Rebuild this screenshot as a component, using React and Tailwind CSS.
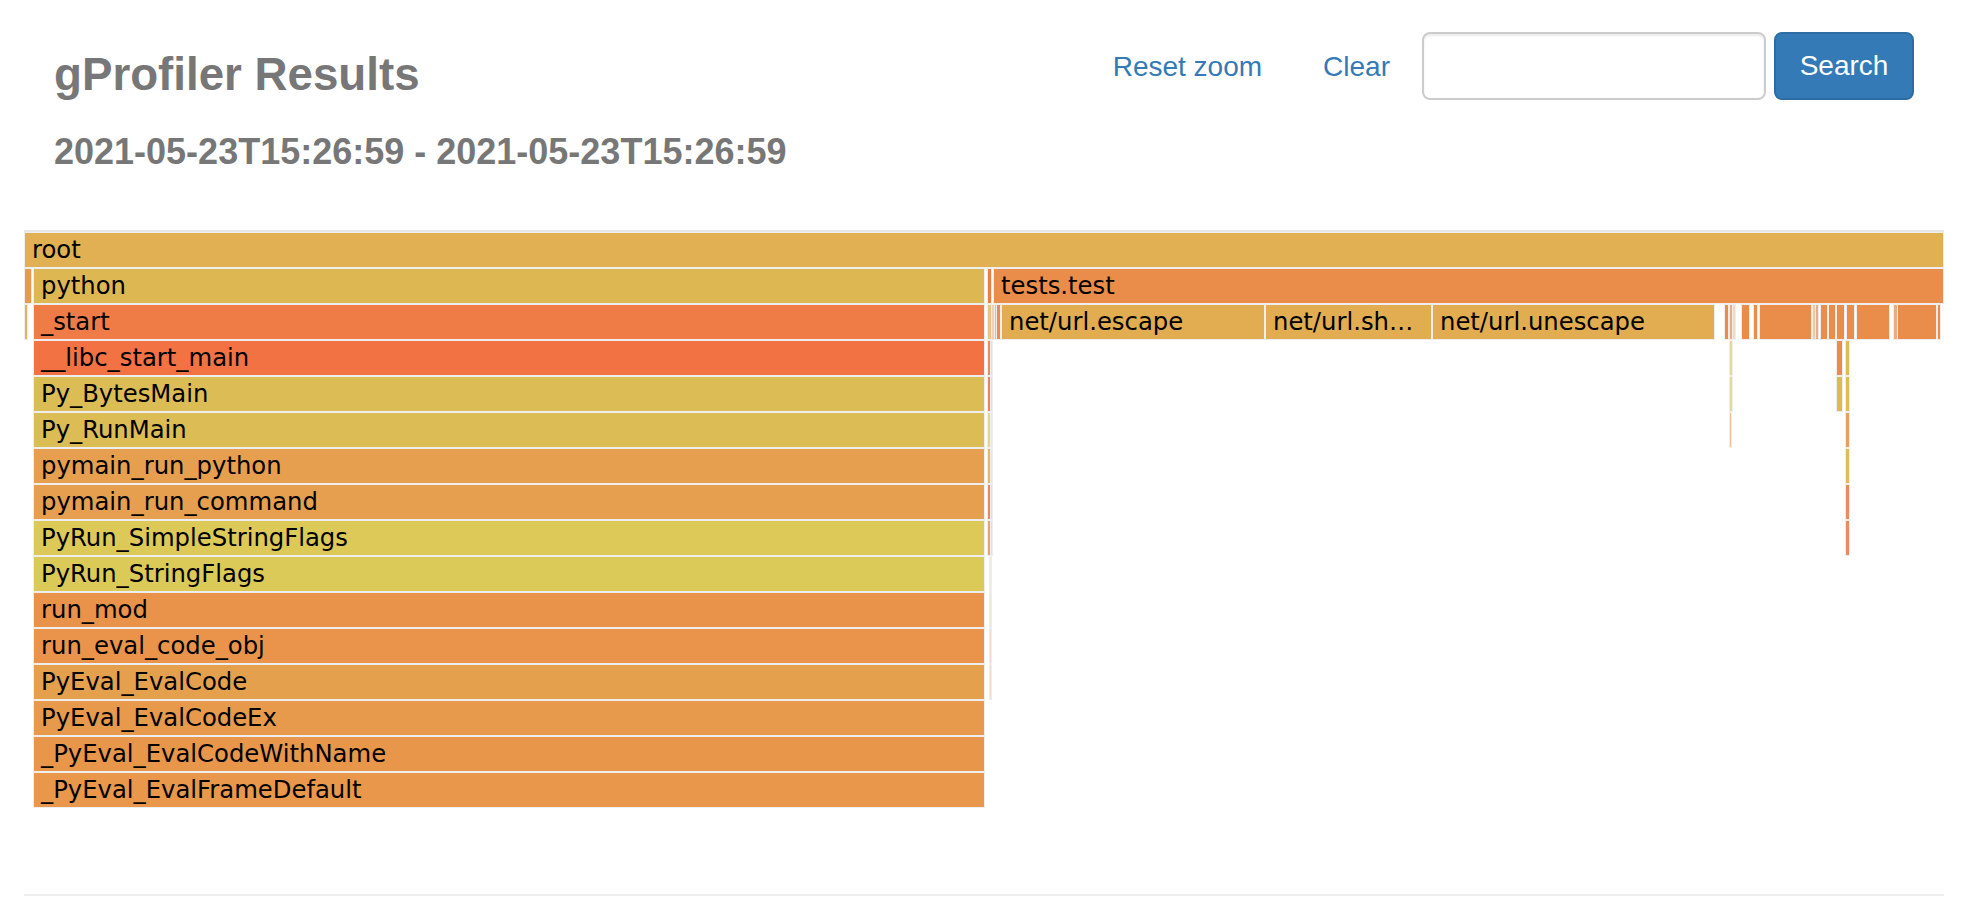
const SANS = "font-['Liberation_Sans',Arial,sans-serif]"

// x0, x1 = fill edges in px, row = depth in the graph
const FRAMES = [
  [25, 1943, 0, '#e0b052', 'root'],

  [25, 31, 1, '#e8994c'],
  [34, 984, 1, '#ddb852', 'python'],
  [988, 991, 1, '#ee7c46'],
  [994, 1943, 1, '#ea8d4a', 'tests.test'],

  [25, 27, 2, '#e8b060'],
  [34, 984, 2, '#ef7c46', '_start'],
  [988, 991, 2, '#e9c388'],
  [992, 994, 2, '#f2d0b0'],
  [995, 996, 2, '#f0b890'],
  [997, 1000, 2, '#ea8d4a'],
  [1002, 1264, 2, '#e2ac50', 'net/url.escape'],
  [1266, 1431, 2, '#e2ac50', 'net/url.sh…'],
  [1433, 1714, 2, '#e2ac50', 'net/url.unescape'],
  [1725, 1728, 2, '#ea8d4a'],
  [1730, 1732, 2, '#eeaa80'],
  [1733, 1735, 2, '#f0d8cc'],
  [1742, 1749, 2, '#ea8d4a'],
  [1754, 1757, 2, '#ea8d4a'],
  [1760, 1811, 2, '#ea8d4a'],
  [1813, 1815, 2, '#f2c8a8'],
  [1816, 1818, 2, '#eeaa80'],
  [1821, 1827, 2, '#ea8d4a'],
  [1829, 1835, 2, '#ea8d4a'],
  [1837, 1844, 2, '#ea8d4a'],
  [1847, 1854, 2, '#ea8d4a'],
  [1857, 1889, 2, '#ea8d4a'],
  [1894, 1897, 2, '#eeaa80'],
  [1898, 1936, 2, '#ea8d4a'],
  [1938, 1940, 2, '#ea8d4a'],

  [34, 984, 3, '#f27244', '__libc_start_main'],
  [988, 990, 3, '#ee8a60'],
  [991, 992, 3, '#f0dcd0'],
  [1730, 1732, 3, '#e8d79a'],
  [1837, 1842, 3, '#ea8d4a'],
  [1846, 1849, 3, '#ddbb55'],

  [34, 984, 4, '#dcbd55', 'Py_BytesMain'],
  [988, 990, 4, '#f08060'],
  [991, 992, 4, '#f0dcd0'],
  [1730, 1732, 4, '#e8d79a'],
  [1837, 1842, 4, '#dfb84e'],
  [1846, 1849, 4, '#ddbb55'],

  [34, 984, 5, '#dbbc55', 'Py_RunMain'],
  [988, 990, 5, '#e4d68a'],
  [991, 992, 5, '#f0e8d0'],
  [1730, 1731, 5, '#f0c09a'],
  [1846, 1849, 5, '#e8a060'],

  [34, 984, 6, '#e59f4e', 'pymain_run_python'],
  [988, 990, 6, '#e8b860'],
  [991, 992, 6, '#f0e4d0'],
  [1846, 1849, 6, '#dcbd5c'],

  [34, 984, 7, '#e69f4f', 'pymain_run_command'],
  [988, 990, 7, '#ee8460'],
  [991, 992, 7, '#f0dcd0'],
  [1846, 1849, 7, '#e98a60'],

  [34, 984, 8, '#dcc957', 'PyRun_SimpleStringFlags'],
  [988, 990, 8, '#e8a470'],
  [991, 992, 8, '#f0dcd0'],
  [1846, 1849, 8, '#e98a60'],

  [34, 984, 9, '#dcca58', 'PyRun_StringFlags'],
  [990, 991, 9, '#f0ecdc'],
  [34, 984, 10, '#e9924a', 'run_mod'],
  [990, 991, 10, '#f0e4d4'],
  [34, 984, 11, '#e9944a', 'run_eval_code_obj'],
  [990, 991, 11, '#f0d8cc'],
  [34, 984, 12, '#e5a04e', 'PyEval_EvalCode'],
  [990, 991, 12, '#f0dccc'],
  [34, 984, 13, '#e7994c', 'PyEval_EvalCodeEx'],
  [34, 984, 14, '#e8964a', '_PyEval_EvalCodeWithName'],
  [34, 984, 15, '#e8974b', '_PyEval_EvalFrameDefault'],
]

const ROW_H = 36
const ROW_COUNT = 16
const GRAPH_LEFT = 24

function Frame({ x0, x1, row, color, label }) {
  return (
    <div
      className="absolute box-border h-[36px] overflow-hidden border border-[#eeeeee]"
      style={{
        left: x0 - 1 - GRAPH_LEFT,
        width: x1 - x0 + 2,
        top: row * ROW_H,
        backgroundColor: color,
      }}
    >
      {label && (
        <div className="pl-[7px] text-[24.3px] leading-[34px] whitespace-nowrap text-black font-['DejaVu_Sans',Verdana,sans-serif]">
          {label}
        </div>
      )}
    </div>
  )
}

export default function App() {
  return (
    <div className={`h-[912px] overflow-hidden bg-white px-[24px] ${SANS}`}>
      <div className="flex h-[230px] items-start justify-between pr-[24px] pl-[30px]">
        <div className="text-[#777777]">
          <h3 className="mt-[50px] text-[45.7px] leading-[50px] font-bold">gProfiler Results</h3>
          <h4 className="mt-[33px] text-[36px] leading-[38px] font-bold">
            2021-05-23T15:26:59 - 2021-05-23T15:26:59
          </h4>
        </div>
        <div className="mt-[32px] flex items-start">
          <a className="mr-[61px] text-[28px] leading-[70px] text-[#337ab7]">Reset zoom</a>
          <a className="mr-[32px] text-[28px] leading-[70px] text-[#337ab7]">Clear</a>
          <input
            type="text"
            className="h-[68px] w-[344px] rounded-[8px] border-2 border-[#cccccc] bg-white shadow-[inset_0_2px_2px_rgba(0,0,0,0.075)]"
          />
          <button className="ml-[8px] h-[68px] w-[140px] rounded-[8px] border-2 border-[#2e6da4] bg-[#337ab7] text-[28px] text-white">
            Search
          </button>
        </div>
      </div>

      <div className="w-[1920px] border-t-[2px] border-[#e6e6e6]">
        <div className="relative" style={{ height: ROW_COUNT * ROW_H }}>
          {FRAMES.map(([x0, x1, row, color, label], i) => (
            <Frame key={i} x0={x0} x1={x1} row={row} color={color} label={label} />
          ))}
        </div>
      </div>

      <hr className="mt-[86px] w-[1920px] border-t-2 border-[#eeeeee]" />
    </div>
  )
}
